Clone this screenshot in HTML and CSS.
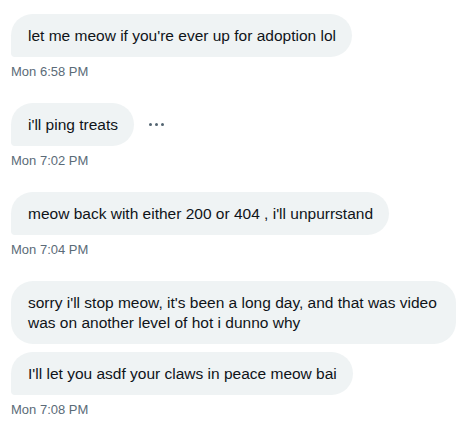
FILE: index.html
```html
<!DOCTYPE html>
<html>
<head>
<meta charset="utf-8">
<link rel="stylesheet" href="styles.css">
</head>
<body>
<div class="thread">
  <div class="group">
    <div class="row"><div class="bubble last">let me meow if you're ever up for adoption lol</div></div>
    <div class="time">Mon 6:58 PM</div>
  </div>
  <div class="group">
    <div class="row">
      <div class="bubble last">i'll ping treats</div>
      <div class="more"><span></span><span></span><span></span></div>
    </div>
    <div class="time">Mon 7:02 PM</div>
  </div>
  <div class="group">
    <div class="row"><div class="bubble last">meow back with either 200 or 404 , i'll unpurrstand</div></div>
    <div class="time">Mon 7:04 PM</div>
  </div>
  <div class="group">
    <div class="row"><div class="bubble">sorry i'll stop meow, it's been a long day, and that was video was on another level of hot i dunno why</div></div>
    <div class="row"><div class="bubble last">I'll let you asdf your claws in peace meow bai</div></div>
    <div class="time">Mon 7:08 PM</div>
  </div>
</div>
</body>
</html>
```

FILE: styles.css
```css
html, body {
  margin: 0;
  padding: 0;
  background: #ffffff;
}
body {
  font-family: "Liberation Sans", Arial, sans-serif;
  color: #0f1419;
}
.thread {
  display: flex;
  flex-direction: column;
  gap: 23px;
  padding: 14px 11px 0 11px;
}
.group {
  display: flex;
  flex-direction: column;
  gap: 8px;
}
.row {
  display: flex;
  align-items: center;
}
.bubble {
  background: #eff3f4;
  border-radius: 22px;
  padding: 12px 16px 11px 17px;
  font-size: 15.5px;
  line-height: 20px;
  max-width: 412px;
}
.bubble.last {
  border-bottom-left-radius: 4px;
}
.time {
  margin-top: -1px;
  font-size: 13px;
  line-height: 16px;
  color: #5b6b78;
}
.more {
  display: flex;
  gap: 3px;
  margin-left: 13px;
  padding: 0 2px;
}
.more span {
  width: 3px;
  height: 3px;
  border-radius: 50%;
  background: #536471;
}
```
